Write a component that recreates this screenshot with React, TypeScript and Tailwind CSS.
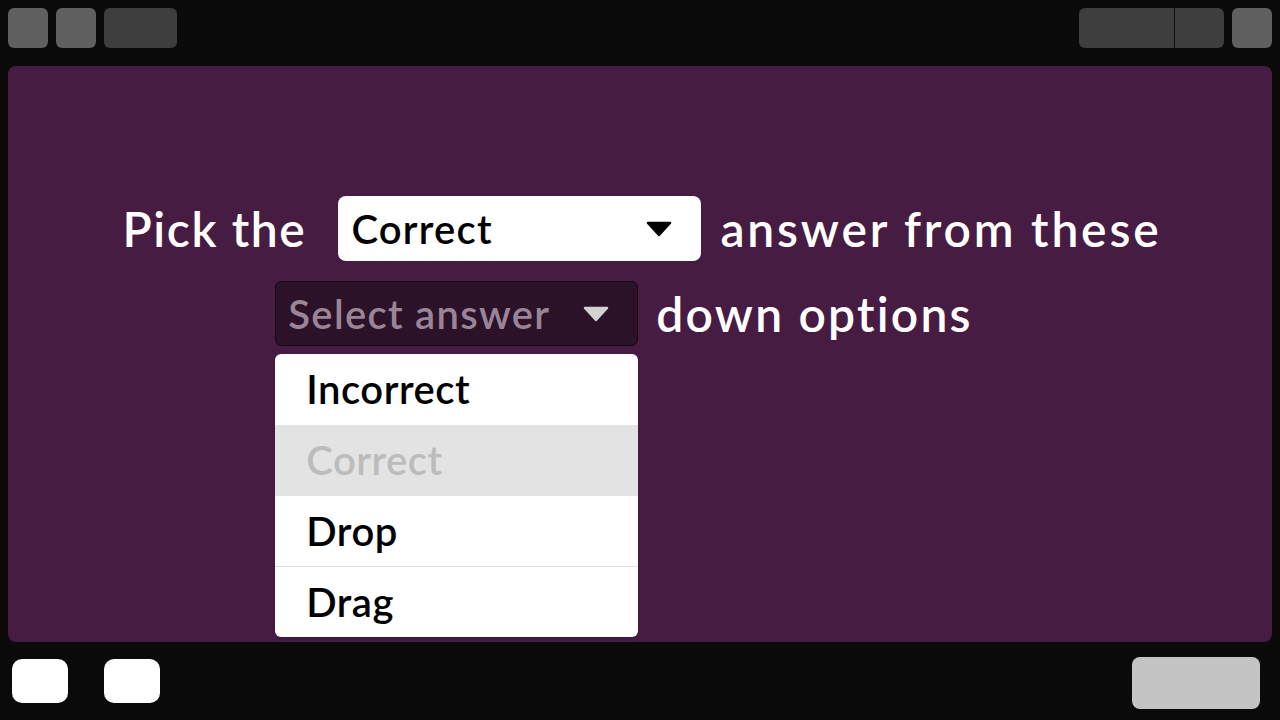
import React from 'react';

const font = { fontFamily: 'Lato, "Noto Sans", sans-serif' };

const Caret = ({ className }: { className: string }) => (
  <svg viewBox="0 0 26 16" className={className}>
    <path d="M2 2 H24 L13 14 Z" fill="currentColor" stroke="currentColor" strokeWidth="2.5" strokeLinejoin="round" />
  </svg>
);

const options = ['Incorrect', 'Correct', 'Drop', 'Drag'];

export default function App() {
  return (
    <div className="w-[1280px] h-[720px] bg-[#0a0a0a] flex flex-col overflow-hidden" style={font}>
      {/* Top bar */}
      <div className="h-[66px] flex items-start justify-between px-2 pt-2">
        <div className="flex gap-2">
          <div className="w-10 h-10 rounded-md bg-[#5f5f5f]" />
          <div className="w-10 h-10 rounded-md bg-[#5f5f5f]" />
          <div className="w-[73px] h-10 rounded-md bg-[#3e3e3e]" />
        </div>
        <div className="flex gap-2">
          <div className="flex h-10 rounded-md bg-[#3e3e3e] overflow-hidden">
            <div className="w-[96px] border-r border-[#111]" />
            <div className="w-[49px]" />
          </div>
          <div className="w-10 h-10 rounded-md bg-[#5f5f5f]" />
        </div>
      </div>

      {/* Main panel */}
      <div className="mx-2 h-[576px] rounded-lg bg-[#471c43] flex flex-col items-center pt-[130px]">
        <div className="flex items-center h-[65px] pl-1">
          <span className="text-white text-[48px] font-semibold leading-none tracking-[1.6px]">Pick the</span>
          <div className="ml-8 w-[363px] h-[65px] bg-white rounded-lg flex items-center justify-between pl-[13px] pr-[29px]">
            <span className="text-black text-[40px] font-semibold leading-none tracking-[1.2px]">Correct</span>
            <Caret className="w-[26px] h-[16px] text-black" />
          </div>
          <span className="ml-[19px] text-white text-[48px] font-semibold leading-none tracking-[2.8px]">answer from these</span>
        </div>
        <div className="flex items-center h-[65px] mt-5 pr-[32px]">
          <div className="relative">
            <div className="w-[363px] h-[65px] bg-[#2b1229] border border-[#160914] rounded-md flex items-center justify-between pl-[12px] pr-[28px]">
              <span className="text-[#9a8598] text-[40px] font-semibold leading-none tracking-[1.3px]">Select answer</span>
              <Caret className="w-[26px] h-[16px] text-[#d2d2d2]" />
            </div>
            <div className="absolute left-0 top-[73px] w-[363px] bg-white rounded-md overflow-hidden shadow">
              {options.map((o, i) => (
                <div
                  key={o}
                  className={`h-[70.75px] flex items-center pl-[31px] text-[40px] font-semibold leading-none tracking-[0.5px] ${
                    i === 1 ? 'bg-[#e3e3e3] text-[#bcbcbc]' : 'text-black'
                  } ${i === 3 ? 'border-t border-[#e0e0e0]' : ''}`}
                >
                  {o}
                </div>
              ))}
            </div>
          </div>
          <span className="ml-[18px] text-white text-[48px] font-semibold leading-none tracking-[2.2px]">down options</span>
        </div>
      </div>

      {/* Bottom bar */}
      <div className="flex-1 flex items-center justify-between pl-3 pr-5">
        <div className="flex gap-9">
          <div className="w-14 h-11 rounded-[10px] bg-white" />
          <div className="w-14 h-11 rounded-[10px] bg-white" />
        </div>
        <div className="w-32 h-[52px] rounded-lg bg-[#c4c4c4] mt-1" />
      </div>
    </div>
  );
}
